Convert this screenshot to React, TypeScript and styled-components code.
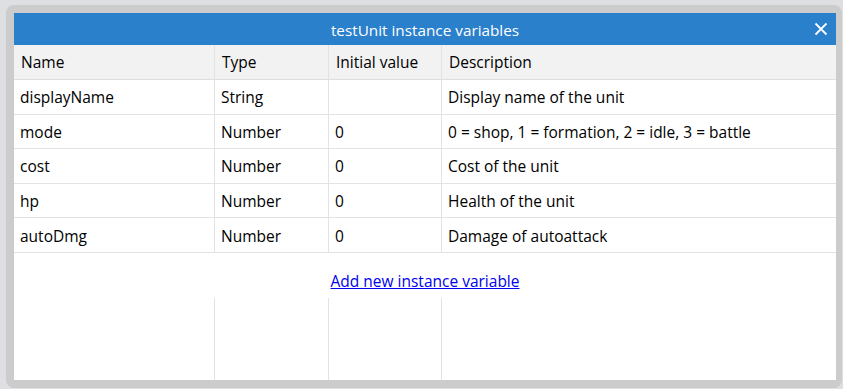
import styled, { createGlobalStyle } from "styled-components";

const columns = ["Name", "Type", "Initial value", "Description"];

const variables = [
  { name: "displayName", type: "String", initial: "", description: "Display name of the unit" },
  { name: "mode", type: "Number", initial: "0", description: "0 = shop, 1 = formation, 2 = idle, 3 = battle" },
  { name: "cost", type: "Number", initial: "0", description: "Cost of the unit" },
  { name: "hp", type: "Number", initial: "0", description: "Health of the unit" },
  { name: "autoDmg", type: "Number", initial: "0", description: "Damage of autoattack" },
];

const GlobalStyle = createGlobalStyle`
  html, body {
    margin: 0;
    padding: 0;
    background: #dedfe3;
    font-family: "Open Sans", "Noto Sans", sans-serif;
  }
`;

export default function App() {
  return (
    <>
      <GlobalStyle />
      <Frame>
        <Window>
          <TitleBar>
            <Title>testUnit instance variables</Title>
            <Close aria-label="close">
              <svg width="14" height="14" viewBox="0 0 14 14">
                <path d="M1.5 1.5 L12.5 12.5 M12.5 1.5 L1.5 12.5" stroke="#fff" strokeWidth="1.8" />
              </svg>
            </Close>
          </TitleBar>
          <Table>
            {columns.map((c, i) => (
              <HeadCell key={c} $last={i === columns.length - 1}>{c}</HeadCell>
            ))}
            {variables.map((v) => (
              <Row key={v.name}>
                <Cell>{v.name}</Cell>
                <Cell>{v.type}</Cell>
                <Cell>{v.initial}</Cell>
                <Cell $last>{v.description}</Cell>
              </Row>
            ))}
          </Table>
          <LinkRow>
            <AddLink href="#">Add new instance variable</AddLink>
          </LinkRow>
          <Filler>
            <FillCol />
            <FillCol />
            <FillCol />
            <FillCol $last />
          </Filler>
        </Window>
      </Frame>
    </>
  );
}

const Frame = styled.div`
  box-sizing: border-box;
  margin: 5px 1px 1px 6px;
  width: 836px;
  height: 383px;
  padding: 8px 6px 8px 8px;
  background: #cccccc;
  border-radius: 8px;
  display: flex;
`;

const Window = styled.div`
  flex: 1;
  display: flex;
  flex-direction: column;
  background: #fff;
  overflow: hidden;
`;

const TitleBar = styled.div`
  height: 32px;
  background: #2b80cc;
  display: flex;
  align-items: center;
  justify-content: center;
  position: relative;
`;

const Title = styled.div`
  color: #fff;
  font-size: 15.3px;
  padding-top: 1px;
`;

const Close = styled.div`
  position: absolute;
  right: 8px;
  top: 9px;
  width: 14px;
  height: 14px;
  display: flex;
`;

const Table = styled.div`
  display: grid;
  grid-template-columns: 201px 114px 113px 1fr;
`;

const Row = styled.div`
  display: contents;
`;

const HeadCell = styled.div<{ $last?: boolean }>`
  height: 34px;
  background: #f2f2f2;
  border-bottom: 1px solid #dedede;
  border-right: ${(p) => (p.$last ? "none" : "1px solid #e2e2e2")};
  padding: 0 7px;
  display: flex;
  align-items: center;
  font-size: 15.5px;
  color: #000;
`;

const Cell = styled.div<{ $last?: boolean }>`
  box-sizing: border-box;
  height: 34.6px;
  border-bottom: 1px solid #e3e3e3;
  border-right: ${(p) => (p.$last ? "none" : "1px solid #e3e3e3")};
  padding: 1px 6px 0 6px;
  display: flex;
  align-items: center;
  font-size: 15.5px;
  color: #000;
  white-space: nowrap;
`;

const LinkRow = styled.div`
  box-sizing: border-box;
  height: 45px;
  padding-top: 12px;
  display: flex;
  align-items: center;
  justify-content: center;
  background: #fff;
`;

const AddLink = styled.a`
  color: #0000ee;
  text-decoration: underline;
  font-size: 15.5px;
`;

const Filler = styled.div`
  flex: 1;
  display: grid;
  grid-template-columns: 201px 114px 113px 1fr;
`;

const FillCol = styled.div<{ $last?: boolean }>`
  border-right: ${(p) => (p.$last ? "none" : "1px solid #e3e3e3")};
`;
